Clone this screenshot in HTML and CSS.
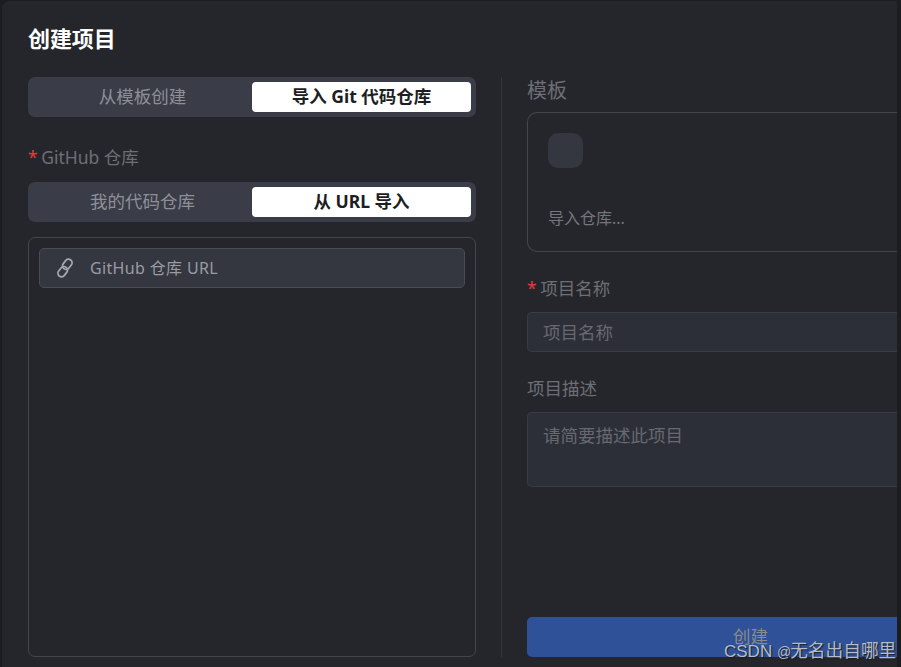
FILE: index.html
```html
<!DOCTYPE html>
<html lang="zh-CN">
<head>
    <meta charset="UTF-8">
    <title>创建项目</title>
    <link rel="stylesheet" href="styles.css">
</head>
<body>
    <section class="dialog">
        <h1 class="dialog-title">创建项目</h1>
        <div class="dialog-body">
            <div class="left-col">
                <div class="switch">
                    <div class="switch-item">从模板创建</div>
                    <div class="switch-item active">导入 Git 代码仓库</div>
                </div>
                <div class="label repo-label"><span class="star">*</span> GitHub 仓库</div>
                <div class="switch">
                    <div class="switch-item">我的代码仓库</div>
                    <div class="switch-item active">从 URL 导入</div>
                </div>
                <div class="repo-box">
                    <div class="url-input">
                        <svg class="link-icon" width="20" height="20" viewBox="0 0 20 20" fill="none" stroke="#a4a6ad" stroke-width="1.8">
                            <rect x="8.7" y="0.8" width="7.2" height="11" rx="3.6" transform="rotate(38 12.3 6.3)"/>
                            <rect x="4.1" y="8.2" width="7.2" height="11" rx="3.6" transform="rotate(38 7.7 13.7)"/>
                        </svg>
                        <span>GitHub 仓库 URL</span>
                    </div>
                </div>
            </div>
            <div class="right-col">
                <div class="label template-label">模板</div>
                <div class="template-card">
                    <div class="template-icon"></div>
                    <div class="template-text">导入仓库...</div>
                </div>
                <div class="label name-label"><span class="star">*</span> 项目名称</div>
                <div class="text-input">项目名称</div>
                <div class="label desc-label">项目描述</div>
                <div class="text-area">请简要描述此项目</div>
                <div class="create-btn"><span>创建</span></div>
            </div>
        </div>
    </section>
    <div class="watermark">CSDN <span class="at">@</span><span class="author">无名出自哪里</span></div>
</body>
</html>
```

FILE: styles.css
```css
*{
    margin: 0;
    padding: 0;
    box-sizing: border-box;
}
body{
    width: 901px;
    height: 667px;
    overflow: hidden;
    background: #1c1d21;
    font-family: "Noto Sans", "Noto Sans CJK SC", sans-serif;
    padding: 1px 0 0 2px;
}
.dialog{
    width: 895px;
    height: 680px;
    background: #25262b;
    border-radius: 8px 0 0 0;
    padding: 22px 0 0 26px;
}
.dialog-title{
    font-size: 22px;
    line-height: 30px;
    font-weight: 700;
    letter-spacing: -0.1px;
    color: #fff;
}
.dialog-body{
    display: flex;
    margin-top: 24px;
}
.left-col{
    width: 448px;
    flex-shrink: 0;
}
.switch{
    display: flex;
    height: 40px;
    padding: 5px;
    border-radius: 7px;
    background: #3a3c47;
}
.switch-item{
    flex: 1;
    border-radius: 4px;
    font-size: 17.5px;
    line-height: 28px;
    text-align: center;
    color: #8e9097;
}
.switch-item.active{
    background: #fff;
    color: #1d1e22;
    font-weight: 700;
    line-height: 29px;
}
.label{
    font-size: 17.5px;
    line-height: 24px;
    color: #6d6f76;
}
.star{
    color: #e03c3c;
    margin-right: -1px;
}
.repo-label{
    margin-top: 28px;
    margin-bottom: 13px;
}
.repo-box{
    height: 420px;
    margin-top: 15px;
    padding: 10px;
    border: 1px solid #44464e;
    border-radius: 7px;
}
.url-input{
    display: flex;
    align-items: center;
    height: 40px;
    padding-left: 15px;
    padding-bottom: 2px;
    gap: 15px;
    border: 1px solid #4a4c55;
    border-radius: 5px;
    background: #343640;
    color: #9a9ca3;
    font-size: 16px;
    letter-spacing: 0.35px;
}
.link-icon{
    margin-top: 2px;
}
.right-col{
    flex: 1;
    margin-left: 25px;
    padding-left: 25px;
    border-left: 1px solid #33353b;
    height: 580px;
}
.template-label{
    margin-top: 2px;
    font-size: 20px;
    line-height: 24px;
}
.template-card{
    height: 140px;
    margin-top: 9px;
    padding: 20px;
    border: 1px solid #44464e;
    border-right: 0;
    border-radius: 10px 0 0 10px;
}
.template-icon{
    width: 35px;
    height: 35px;
    border-radius: 10px;
    background: #343640;
}
.template-text{
    margin-top: 39px;
    font-size: 16px;
    line-height: 22px;
    color: #74767d;
}
.name-label{
    margin-top: 24px;
}
.text-input{
    height: 40px;
    margin-top: 12px;
    padding-left: 15px;
    border: 1px solid #3a3c44;
    border-right: 0;
    border-radius: 5px 0 0 5px;
    background: #2d2f38;
    color: #676970;
    font-size: 17.5px;
    line-height: 39px;
}
.desc-label{
    margin-top: 24px;
}
.text-area{
    height: 75px;
    margin-top: 12px;
    padding: 9px 0 0 15px;
    border: 1px solid #3a3c44;
    border-right: 0;
    border-radius: 5px 0 0 5px;
    background: #2d2f38;
    color: #676970;
    font-size: 17.5px;
    line-height: 26px;
}
.create-btn{
    height: 40px;
    margin-top: 130px;
    border-radius: 5px 0 0 5px;
    background: #2e5197;
    color: #8a8b8c;
    font-size: 17.5px;
    line-height: 38px;
    padding-left: 206px;
}
.watermark{
    position: absolute;
    left: 724px;
    top: 640px;
    font-family: "Liberation Sans", "Noto Sans CJK SC", sans-serif;
    font-size: 17px;
    line-height: 22px;
    white-space: nowrap;
    color: #b4bccb;
    text-shadow: 1px 1px 1px #1c1d21;
}
.at{
    font-size: 14px;
    margin-right: -1px;
}
.author{
    font-size: 17.7px;
}
```
